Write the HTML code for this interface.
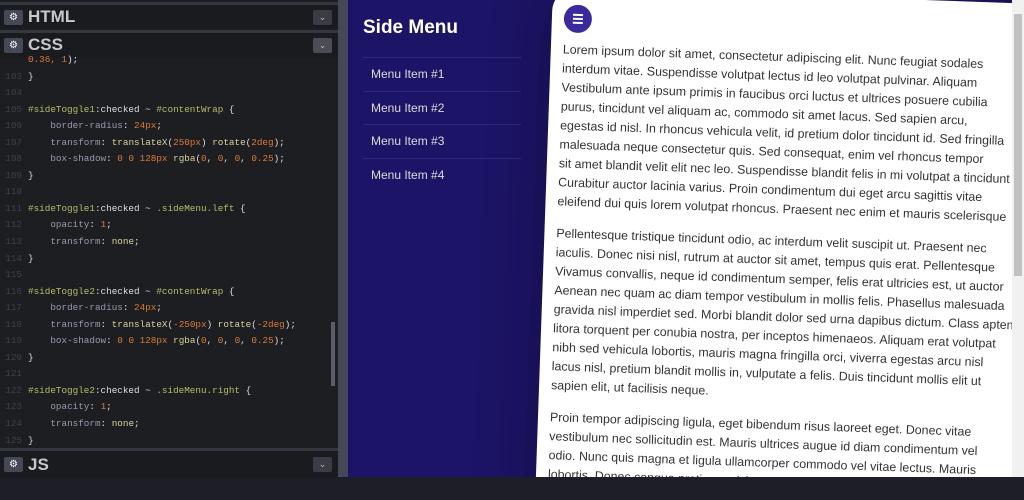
<!DOCTYPE html>
<html><head><meta charset="utf-8"><style>
*{margin:0;padding:0;box-sizing:border-box}
body{width:1024px;height:500px;overflow:hidden;background:#1e1f26;position:relative;font-family:"Liberation Sans",sans-serif}
.left{position:absolute;left:0;top:0;width:338px;height:477px;background:#1d1e22}
.div{position:absolute;left:338px;top:0;width:10px;height:477px;background:#444857}
.hdr{position:absolute;left:0;width:338px;background:#1a1b1f;height:26px;border-top:3px solid #343640}
.hdr .g{position:absolute;left:4px;top:5px;width:19px;height:15px;background:#444857;border-radius:2px;color:#fff;font-size:10px;text-align:center;line-height:15px}
.hdr .t{position:absolute;left:28px;top:2px;color:#c8c8cc;font-size:17px;font-weight:bold}
.hdr .c{position:absolute;right:6px;top:5px;width:19px;height:15px;background:#3a3c45;border-radius:2px;color:#bbb;font-size:9px;text-align:center;line-height:15px}
.code{position:absolute;left:0;top:52px;width:330px;height:396px;overflow:hidden;font-family:"Liberation Mono",monospace;font-size:9.3px;color:#ddd}
.ln{height:16.55px;line-height:16.55px;white-space:pre}
.n{display:inline-block;width:22px;text-align:right;color:#3e4049;margin-right:6px}
.s{color:#b5bd68}.p{color:#9e98ae}.v{color:#dd7a35}.f{color:#d9d39a}.w{color:#e8e8e8}
.sb{position:absolute;left:331px;top:322px;width:4px;height:64px;background:#5a5c66}
.right{position:absolute;left:348px;top:0;width:676px;height:477px;background:#1c1466;overflow:hidden}
.menu{position:absolute;left:15px;top:0;width:158px}
.menu h1{color:#fff;font-size:19px;font-weight:bold;margin-top:17px;height:40px}
.menu div{border-top:1px solid #2f2880;height:33.5px;line-height:33px;color:#ddd;font-size:12px;padding-left:8px}
.card{position:absolute;left:205px;top:-13px;width:720px;height:640px;background:#fff;border-radius:24px;transform:rotate(2deg);transform-origin:0 0;box-shadow:0 0 60px rgba(0,0,0,.3)}
.ham{position:absolute;left:12px;top:17px;width:28px;height:28px;border-radius:50%;background:#3a2a9c}
.ham i{position:absolute;left:9px;width:10px;height:2px;background:#fff}
.txt{position:absolute;left:12px;top:53px;color:#333;font-size:12.4px;line-height:19px;white-space:nowrap}
.txt p{margin-bottom:13px}
.vs{position:absolute;left:1012px;top:0;width:12px;height:477px;background:#f1f1f1}
.vs .th{position:absolute;left:2px;top:14px;width:8px;height:262px;background:#c1c1c1}
</style></head><body>
<div class="left">
<div class="hdr" style="top:2px"><span class="g">⚙</span><span class="t">HTML</span><span class="c">⌄</span></div>
<div class="hdr" style="top:30px;height:28px"><span class="g">⚙</span><span class="t">CSS</span><span class="c" style="background:#4a4c56">⌄</span></div>
<div class="code">
<div class="ln"><span class="n"></span><span class="v">0.36, 1</span>);</div>
<div class="ln"><span class="n">103</span>}</div>
<div class="ln"><span class="n">104</span></div>
<div class="ln"><span class="n">105</span><span class="s">#sideToggle1</span>:checked ~ <span class="s">#contentWrap</span> {</div>
<div class="ln"><span class="n">106</span>    <span class="p">border-radius</span>: <span class="v">24px</span>;</div>
<div class="ln"><span class="n">107</span>    <span class="p">transform</span>: <span class="f">translateX</span>(<span class="v">250px</span>) <span class="f">rotate</span>(<span class="v">2deg</span>);</div>
<div class="ln"><span class="n">108</span>    <span class="p">box-shadow</span>: <span class="v">0 0 128px</span> <span class="f">rgba</span>(<span class="v">0</span>, <span class="v">0</span>, <span class="v">0</span>, <span class="v">0.25</span>);</div>
<div class="ln"><span class="n">109</span>}</div>
<div class="ln"><span class="n">110</span></div>
<div class="ln"><span class="n">111</span><span class="s">#sideToggle1</span>:checked ~ <span class="s">.sideMenu.left</span> {</div>
<div class="ln"><span class="n">112</span>    <span class="p">opacity</span>: <span class="v">1</span>;</div>
<div class="ln"><span class="n">113</span>    <span class="p">transform</span>: <span class="f">none</span>;</div>
<div class="ln"><span class="n">114</span>}</div>
<div class="ln"><span class="n">115</span></div>
<div class="ln"><span class="n">116</span><span class="s">#sideToggle2</span>:checked ~ <span class="s">#contentWrap</span> {</div>
<div class="ln"><span class="n">117</span>    <span class="p">border-radius</span>: <span class="v">24px</span>;</div>
<div class="ln"><span class="n">118</span>    <span class="p">transform</span>: <span class="f">translateX</span>(<span class="v">-250px</span>) <span class="f">rotate</span>(<span class="v">-2deg</span>);</div>
<div class="ln"><span class="n">119</span>    <span class="p">box-shadow</span>: <span class="v">0 0 128px</span> <span class="f">rgba</span>(<span class="v">0</span>, <span class="v">0</span>, <span class="v">0</span>, <span class="v">0.25</span>);</div>
<div class="ln"><span class="n">120</span>}</div>
<div class="ln"><span class="n">121</span></div>
<div class="ln"><span class="n">122</span><span class="s">#sideToggle2</span>:checked ~ <span class="s">.sideMenu.right</span> {</div>
<div class="ln"><span class="n">123</span>    <span class="p">opacity</span>: <span class="v">1</span>;</div>
<div class="ln"><span class="n">124</span>    <span class="p">transform</span>: <span class="f">none</span>;</div>
<div class="ln"><span class="n">125</span>}</div>
</div>
<div class="sb"></div>
<div class="hdr" style="top:448px;height:29px"><span class="g" style="top:6px">⚙</span><span class="t" style="top:4px">JS</span><span class="c" style="top:6px">⌄</span></div>
</div>
<div class="div"></div>
<div class="right">
<div class="menu"><h1>Side Menu</h1>
<div>Menu Item #1</div><div>Menu Item #2</div><div>Menu Item #3</div><div style="border-bottom:none">Menu Item #4</div></div>
<div class="card">
<div class="ham"><i style="top:9px"></i><i style="top:13px"></i><i style="top:17px"></i></div>
<div class="txt">
<p>Lorem ipsum dolor sit amet, consectetur adipiscing elit. Nunc feugiat sodales<br>interdum vitae. Suspendisse volutpat lectus id leo volutpat pulvinar. Aliquam<br>Vestibulum ante ipsum primis in faucibus orci luctus et ultrices posuere cubilia<br>purus, tincidunt vel aliquam ac, commodo sit amet lacus. Sed sapien arcu,<br>egestas id nisl. In rhoncus vehicula velit, id pretium dolor tincidunt id. Sed fringilla<br>malesuada neque consectetur quis. Sed consequat, enim vel rhoncus tempor<br>sit amet blandit velit elit nec leo. Suspendisse blandit felis in mi volutpat a tincidunt<br>Curabitur auctor lacinia varius. Proin condimentum dui eget arcu sagittis vitae<br>eleifend dui quis lorem volutpat rhoncus. Praesent nec enim et mauris scelerisque</p>
<p>Pellentesque tristique tincidunt odio, ac interdum velit suscipit ut. Praesent nec<br>iaculis. Donec nisi nisl, rutrum at auctor sit amet, tempus quis erat. Pellentesque<br>Vivamus convallis, neque id condimentum semper, felis erat ultricies est, ut auctor<br>Aenean nec quam ac diam tempor vestibulum in mollis felis. Phasellus malesuada<br>gravida nisl imperdiet sed. Morbi blandit dolor sed urna dapibus dictum. Class aptent<br>litora torquent per conubia nostra, per inceptos himenaeos. Aliquam erat volutpat<br>nibh sed vehicula lobortis, mauris magna fringilla orci, viverra egestas arcu nisl<br>lacus nisl, pretium blandit mollis in, vulputate a felis. Duis tincidunt mollis elit ut<br>sapien elit, ut facilisis neque.</p>
<p>Proin tempor adipiscing ligula, eget bibendum risus laoreet eget. Donec vitae<br>vestibulum nec sollicitudin est. Mauris ultrices augue id diam condimentum vel<br>odio. Nunc quis magna et ligula ullamcorper commodo vel vitae lectus. Mauris<br>lobortis. Donec congue pretium pulvinar dolor sit amet</p>
</div></div>
</div>
<div class="vs"><div class="th"></div></div>
</body></html>
